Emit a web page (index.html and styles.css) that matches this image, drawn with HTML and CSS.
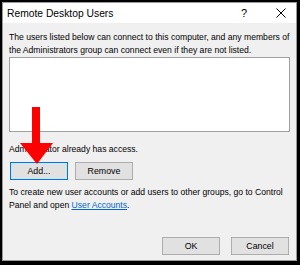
FILE: index.html
```html
<!DOCTYPE html>
<html>
<head>
<meta charset="utf-8">
<link rel="stylesheet" href="styles.css">
</head>
<body>
<div class="dialog">
  <div class="titlebar">
    <span class="title">Remote Desktop Users</span>
    <span class="help">?</span>
    <svg class="close" width="10" height="10" viewBox="0 0 10 10"><path d="M0.5 0.5 L9.5 9.5 M9.5 0.5 L0.5 9.5" stroke="#000" stroke-width="1"/></svg>
  </div>
  <div class="content">
    <p class="desc">The users listed below can connect to this computer, and any members of the Administrators group can connect even if they are not listed.</p>
    <div class="listbox"></div>
    <p class="note">Administrator already has access.</p>
    <div class="row">
      <button class="btn focus">Add...</button>
      <button class="btn">Remove</button>
    </div>
    <p class="info">To create new user accounts or add users to other groups, go to Control Panel and open <a class="link">User Accounts</a>.</p>
    <div class="footer">
      <button class="btn">OK</button>
      <button class="btn">Cancel</button>
    </div>
  </div>
  <svg class="arrow" width="40" height="60" viewBox="0 0 40 60"><rect x="12" y="0" width="8" height="37" fill="#ff0000"/><polygon points="0,36 33,36 17,57" fill="#ff0000"/></svg>
</div>
</body>
</html>
```
FILE: styles.css
```css
html, body { margin: 0; padding: 0; }
body { background: #000; width: 300px; height: 265px; overflow: hidden; }
.dialog {
  position: relative;
  margin: 2px 0 0 2px;
  width: 293px;
  height: 257px;
  border: 1px solid #9a9a9a;
  background: #f0f0f0;
  font-family: "Liberation Sans", Arial, sans-serif;
  font-size: 8.6px;
  color: #000;
}
.titlebar {
  height: 20px;
  background: #fff;
  display: flex;
  align-items: center;
  padding-left: 4px;
}
.title { flex: 1; font-size: 10.3px; }
.help { font-size: 11px; margin-right: 29px; }
.close { margin-right: 10px; }
.content { padding: 0 6px; }
.desc { margin: 8px 0 0 0; line-height: 13px; }
.listbox {
  margin-top: 0;
  height: 73px;
  width: 279px;
  background: #fff;
  border: 1px solid #a0a0a0;
}
.note { margin: 11px 0 0 0; line-height: 13px; }
.row { display: flex; gap: 7px; margin-top: 6px; padding-left: 1px; }
.btn {
  width: 58px;
  height: 18px;
  background: #e1e1e1;
  border: 1px solid #adadad;
  font-family: "Liberation Sans", Arial, sans-serif;
  font-size: 8.8px;
  padding: 0;
  color: #000;
}
.btn.focus { border-color: #0078d7; box-shadow: inset 0 0 0 1px #cde3f7; }
.info { margin: 6px 0 0 0; line-height: 13px; }
.link { color: #0066cc; text-decoration: underline; }
.footer { display: flex; justify-content: flex-end; gap: 11px; margin-top: 25px; padding-right: 1px; }
.arrow { position: absolute; left: 17px; top: 104px; }
```
